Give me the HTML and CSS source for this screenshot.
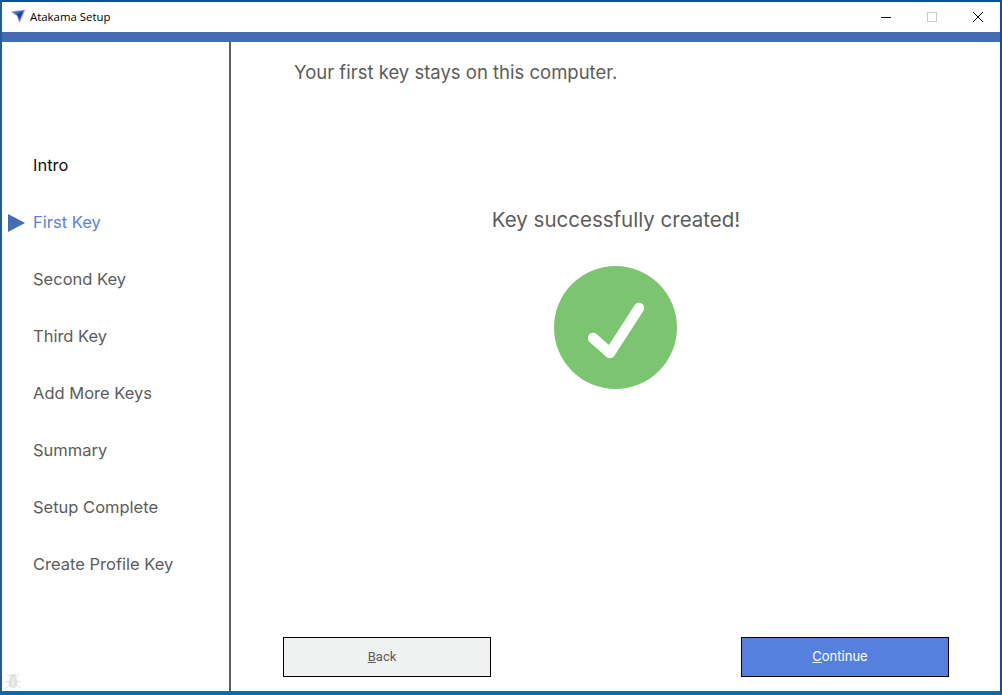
FILE: index.html
```html
<!DOCTYPE html>
<html lang="en">
<head>
    <meta charset="UTF-8">
    <meta name="viewport" content="width=device-width, initial-scale=1.0">
    <title>Atakama Setup</title>
    <link rel="stylesheet" href="styles.css">
</head>
<body>
    <div class="window">
        <div class="titlebar">
            <svg class="app-icon" width="16" height="15" viewBox="0 0 16 15">
                <polygon points="0.5,2.5 15.5,0.5 9.5,14.5 7,7.5" fill="#9db0e0"/>
                <polygon points="3,3 14,1.5 9.5,12 7.5,6.5" fill="#4466bb"/>
                <polygon points="7,5 13,2.5 9.5,10" fill="#1f3f9e"/>
            </svg>
            <span class="app-title">Atakama Setup</span>
            <div class="window-controls">
                <svg class="control" width="46" height="32" viewBox="0 0 46 32">
                    <line x1="18" y1="16.5" x2="28" y2="16.5" stroke="#000"/>
                </svg>
                <svg class="control" width="46" height="32" viewBox="0 0 46 32">
                    <rect x="18.5" y="11.5" width="9" height="9" fill="none" stroke="#ccc"/>
                </svg>
                <svg class="control" width="46" height="32" viewBox="0 0 46 32">
                    <path d="M18 11 L28 21 M28 11 L18 21" stroke="#000" fill="none"/>
                </svg>
            </div>
        </div>
        <div class="band"></div>
        <div class="content">
            <aside class="sidebar">
                <ul class="steps">
                    <li class="step done">Intro</li>
                    <li class="step active">First Key</li>
                    <li class="step">Second Key</li>
                    <li class="step">Third Key</li>
                    <li class="step">Add More Keys</li>
                    <li class="step">Summary</li>
                    <li class="step">Setup Complete</li>
                    <li class="step">Create Profile Key</li>
                </ul>
                <svg class="bug" width="16" height="16" viewBox="0 0 16 16">
                    <ellipse cx="8" cy="9.5" rx="4.5" ry="6" fill="#dfe2df"/>
                    <rect x="7.5" y="5" width="1" height="11" fill="#f6f6f6"/>
                    <ellipse cx="8" cy="2.8" rx="3" ry="2" fill="#dfe2df"/>
                    <path d="M2 1 L5 4.5 M14 1 L11 4.5 M0 8.5 H4 M16 8.5 H12 M1 15 L5 12 M15 15 L11 12" stroke="#dfe2df" fill="none"/>
                </svg>
            </aside>
            <main class="main">
                <h1 class="heading">Your first key stays on this computer.</h1>
                <div class="result">
                    <p class="result-text">Key successfully created!</p>
                    <svg class="check" width="123" height="123" viewBox="0 0 123 123">
                        <circle cx="61.5" cy="61.5" r="61.5" fill="#7cc570"/>
                        <path d="M39 72 L56 87 L85 42" fill="none" stroke="#fff" stroke-width="10.5" stroke-linecap="round" stroke-linejoin="round"/>
                    </svg>
                </div>
                <div class="buttons">
                    <button class="btn btn-back"><u>B</u>ack</button>
                    <button class="btn btn-continue"><u>C</u>ontinue</button>
                </div>
            </main>
        </div>
    </div>
</body>
</html>
```

FILE: styles.css
```css
html, body {
    margin: 0;
    padding: 0;
    height: 100%;
}
body {
    font-family: Inter, "Open Sans", sans-serif;
    background: #fff;
}
.window {
    box-sizing: border-box;
    width: 1002px;
    height: 695px;
    display: flex;
    flex-direction: column;
    background: #fff;
    border-top: 2px solid #0b4f9e;
    border-left: 2px solid #1f5c9c;
    border-right: 2px solid #0f4f9a;
    border-bottom: 4px solid #0f6aa6;
}
.titlebar {
    height: 30px;
    display: flex;
    align-items: center;
    flex-shrink: 0;
}
.app-icon {
    margin-left: 8px;
    margin-top: -2px;
}
.app-title {
    margin-left: 4px;
    margin-top: -2px;
    font-family: "Open Sans", sans-serif;
    font-size: 11.4px;
    color: #000;
}
.window-controls {
    margin-left: auto;
    margin-right: -1px;
    display: flex;
    margin-top: -1px;
}
.control {
    display: block;
}
.band {
    height: 10px;
    background: #456bb3;
    flex-shrink: 0;
}
.content {
    flex: 1;
    display: flex;
    min-height: 0;
}
.sidebar {
    box-sizing: border-box;
    width: 229px;
    border-right: 2px solid #5f5f5f;
    display: flex;
    flex-direction: column;
    flex-shrink: 0;
}
.steps {
    list-style: none;
    margin: 0;
    padding: 95px 0 0 31px;
}
.step {
    position: relative;
    line-height: 57px;
    height: 57px;
    font-size: 16.5px;
    color: #5c5c5c;
}
.step.done {
    color: #111;
}
.step.active {
    color: #5a82d8;
}
.step.active::before {
    content: "";
    position: absolute;
    left: -25px;
    top: 20px;
    border-left: 17px solid #456bb3;
    border-top: 9px solid transparent;
    border-bottom: 9px solid transparent;
}
.bug {
    margin: auto 0 2px 3px;
}
.main {
    flex: 1;
    display: flex;
    flex-direction: column;
    padding: 0 51px 14px 52px;
    min-width: 0;
}
.heading {
    margin: 17px 0 0 11px;
    line-height: 26px;
    font-size: 18.5px;
    font-weight: 400;
    color: #5c5c5c;
}
.result {
    display: flex;
    flex-direction: column;
    align-items: center;
    margin-top: 120px;
}
.result-text {
    margin: 0 0 31px;
    line-height: 30px;
    font-size: 20.5px;
    color: #5c5c5c;
}
.check {
    display: block;
    margin-right: 2px;
}
.buttons {
    margin-top: auto;
    display: flex;
    justify-content: space-between;
}
.btn {
    box-sizing: border-box;
    width: 208px;
    height: 40px;
    border: 1px solid #000;
    font-size: 13px;
    padding: 0 10px 1px 0;
}
.btn-back {
    background: #f0f2f1;
    color: #5c5c5c;
    font-family: Roboto, sans-serif;
}
.btn-continue {
    background: #5580de;
    color: #fff;
    font-family: Inter, sans-serif;
    padding-bottom: 2px;
}
```
